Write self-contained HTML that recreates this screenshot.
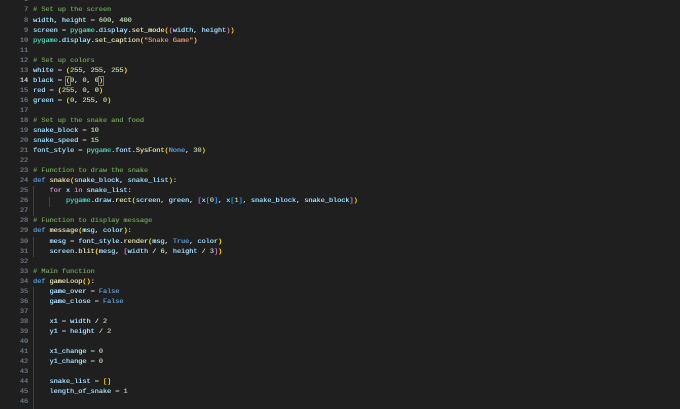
<!DOCTYPE html>
<html><head><style>
body{margin:0;background:#1f1f1f;width:680px;height:409px;overflow:hidden;font-family:"Liberation Mono",monospace;font-size:6.85px;}
#w{position:absolute;top:-4.6px;left:0;}
.l{height:10.06px;line-height:10.06px;white-space:pre;position:relative;color:#cccccc;text-shadow:0.3px 0 0 currentColor}
.n{display:inline-block;width:28px;text-align:right;color:#6e7681;margin-right:5px}
.cur .n{color:#cccccc}
.c{color:#6a9955}.v{color:#9cdcfe}.f{color:#dcdcaa}.m{color:#b5cea8}.s{color:#ce9178}
.k{color:#569cd6}.p{color:#c586c0}.t{color:#4ec9b0}.y{color:#ffd700}.o{color:#da70d6}.b{color:#179fff}
.g{position:absolute;width:1px;background:#404040}
</style></head><body>
<div class="g" style="left:33px;top:186px;height:30px"></div>
<div class="g" style="left:49px;top:197px;height:10px"></div>
<div class="g" style="left:33px;top:237px;height:20px"></div>
<div class="g" style="left:33px;top:287px;height:122px"></div>
<div id="w">
<div class="l"><span class="n">6</span></div>
<div class="l"><span class="n">7</span><span class="c"># Set up the screen</span></div>
<div class="l"><span class="n">8</span><span class="v">width</span>, <span class="v">height</span> = <span class="m">600</span>, <span class="m">400</span></div>
<div class="l"><span class="n">9</span><span class="v">screen</span> = <span class="t">pygame</span>.<span class="v">display</span>.<span class="f">set_mode</span><span class="y">(</span><span class="o">(</span><span class="v">width</span>, <span class="v">height</span><span class="o">)</span><span class="y">)</span></div>
<div class="l"><span class="n">10</span><span class="t">pygame</span>.<span class="v">display</span>.<span class="f">set_caption</span><span class="y">(</span><span class="s">"Snake Game"</span><span class="y">)</span></div>
<div class="l"><span class="n">11</span></div>
<div class="l"><span class="n">12</span><span class="c"># Set up colors</span></div>
<div class="l"><span class="n">13</span><span class="v">white</span> = <span class="y">(</span><span class="m">255</span>, <span class="m">255</span>, <span class="m">255</span><span class="y">)</span></div>
<div class="l cur"><span class="n">14</span><span class="v">black</span> = <span class="y" style="outline:1px solid #777">(</span><span class="m">0</span>, <span class="m">0</span>, <span class="m">0</span><span class="y" style="outline:1px solid #777">)</span></div>
<div class="l"><span class="n">15</span><span class="v">red</span> = <span class="y">(</span><span class="m">255</span>, <span class="m">0</span>, <span class="m">0</span><span class="y">)</span></div>
<div class="l"><span class="n">16</span><span class="v">green</span> = <span class="y">(</span><span class="m">0</span>, <span class="m">255</span>, <span class="m">0</span><span class="y">)</span></div>
<div class="l"><span class="n">17</span></div>
<div class="l"><span class="n">18</span><span class="c"># Set up the snake and food</span></div>
<div class="l"><span class="n">19</span><span class="v">snake_block</span> = <span class="m">10</span></div>
<div class="l"><span class="n">20</span><span class="v">snake_speed</span> = <span class="m">15</span></div>
<div class="l"><span class="n">21</span><span class="v">font_style</span> = <span class="t">pygame</span>.<span class="v">font</span>.<span class="f">SysFont</span><span class="y">(</span><span class="k">None</span>, <span class="m">30</span><span class="y">)</span></div>
<div class="l"><span class="n">22</span></div>
<div class="l"><span class="n">23</span><span class="c"># Function to draw the snake</span></div>
<div class="l"><span class="n">24</span><span class="k">def</span> <span class="f">snake</span><span class="y">(</span><span class="v">snake_block</span>, <span class="v">snake_list</span><span class="y">)</span>:</div>
<div class="l"><span class="n">25</span>    <span class="p">for</span> <span class="v">x</span> <span class="p">in</span> <span class="v">snake_list</span>:</div>
<div class="l"><span class="n">26</span>        <span class="t">pygame</span>.<span class="v">draw</span>.<span class="f">rect</span><span class="y">(</span><span class="v">screen</span>, <span class="v">green</span>, <span class="o">[</span><span class="v">x</span><span class="b">[</span><span class="m">0</span><span class="b">]</span>, <span class="v">x</span><span class="b">[</span><span class="m">1</span><span class="b">]</span>, <span class="v">snake_block</span>, <span class="v">snake_block</span><span class="o">]</span><span class="y">)</span></div>
<div class="l"><span class="n">27</span></div>
<div class="l"><span class="n">28</span><span class="c"># Function to display message</span></div>
<div class="l"><span class="n">29</span><span class="k">def</span> <span class="f">message</span><span class="y">(</span><span class="v">msg</span>, <span class="v">color</span><span class="y">)</span>:</div>
<div class="l"><span class="n">30</span>    <span class="v">mesg</span> = <span class="v">font_style</span>.<span class="f">render</span><span class="y">(</span><span class="v">msg</span>, <span class="k">True</span>, <span class="v">color</span><span class="y">)</span></div>
<div class="l"><span class="n">31</span>    <span class="v">screen</span>.<span class="f">blit</span><span class="y">(</span><span class="v">mesg</span>, <span class="o">[</span><span class="v">width</span> / <span class="m">6</span>, <span class="v">height</span> / <span class="m">3</span><span class="o">]</span><span class="y">)</span></div>
<div class="l"><span class="n">32</span></div>
<div class="l"><span class="n">33</span><span class="c"># Main function</span></div>
<div class="l"><span class="n">34</span><span class="k">def</span> <span class="f">gameLoop</span><span class="y">()</span>:</div>
<div class="l"><span class="n">35</span>    <span class="v">game_over</span> = <span class="k">False</span></div>
<div class="l"><span class="n">36</span>    <span class="v">game_close</span> = <span class="k">False</span></div>
<div class="l"><span class="n">37</span></div>
<div class="l"><span class="n">38</span>    <span class="v">x1</span> = <span class="v">width</span> / <span class="m">2</span></div>
<div class="l"><span class="n">39</span>    <span class="v">y1</span> = <span class="v">height</span> / <span class="m">2</span></div>
<div class="l"><span class="n">40</span></div>
<div class="l"><span class="n">41</span>    <span class="v">x1_change</span> = <span class="m">0</span></div>
<div class="l"><span class="n">42</span>    <span class="v">y1_change</span> = <span class="m">0</span></div>
<div class="l"><span class="n">43</span></div>
<div class="l"><span class="n">44</span>    <span class="v">snake_list</span> = <span class="y">[]</span></div>
<div class="l"><span class="n">45</span>    <span class="v">length_of_snake</span> = <span class="m">1</span></div>
<div class="l"><span class="n">46</span></div>
</div>
</body></html>
